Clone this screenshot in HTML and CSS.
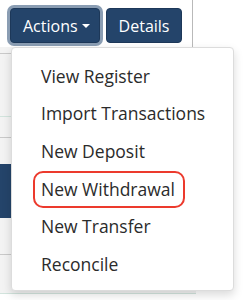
FILE: index.html
```html
<!DOCTYPE html>
<html lang="en">
<head>
<meta charset="UTF-8">
<meta name="viewport" content="width=device-width, initial-scale=1.0">
<title>Account actions</title>
<link rel="stylesheet" href="styles.css">
</head>
<body>
<div class="page">
    <div class="toolbar">
        <div class="btn-group">
            <a href="#" class="btn btn-focus">Actions <span class="caret"></span></a>
            <a href="#" class="btn">Details</a>
        </div>
        <div class="side-cell"></div>
    </div>
    <div class="rows">
        <div class="row row-a"></div>
        <div class="row row-b"></div>
        <div class="row row-c"></div>
        <div class="row row-d"></div>
        <div class="row row-e"></div>
        <div class="row row-f"></div>
        <div class="row row-g"></div>
    </div>

    <!-- dropdown menu open under Actions -->
    <ul class="dropdown-menu">
        <li><a href="#">View Register</a></li>
        <li><a href="#">Import Transactions</a></li>
        <li><a href="#">New Deposit</a></li>
        <li><a href="#" class="marked">New Withdrawal</a></li>
        <li><a href="#">New Transfer</a></li>
        <li><a href="#">Reconcile</a></li>
    </ul>
</div>
</body>
</html>
```

FILE: styles.css
```css
body {
    margin: 0;
    padding: 0;
    background-color: #fff;
    font-family: "Open Sans", "Liberation Sans", Arial, sans-serif;
}
.page {
    position: relative;
    width: 245px;
    height: 300px;
    overflow: hidden;
}
.toolbar {
    display: flex;
    height: 47px;
}
.btn-group {
    display: flex;
    gap: 6px;
    padding: 8px 0 0 10px;
}
.btn {
    display: inline-flex;
    align-items: center;
    height: 35px;
    box-sizing: border-box;
    padding: 0 12px;
    background-color: #24446a;
    border: 1px solid #1d3859;
    border-radius: 4px;
    color: #fff;
    font-size: 16px;
    text-decoration: none;
}
.btn-focus {
    padding-right: 9px;
    box-shadow: 0 0 0 3px #8a9db3;
}
.caret {
    display: inline-block;
    width: 0;
    height: 0;
    margin-left: 4px;
    border-top: 4px solid #fff;
    border-left: 4px solid transparent;
    border-right: 4px solid transparent;
}
.side-cell {
    margin-left: auto;
    width: 52px;
    border-left: 1px solid #b9b9b9;
}
.rows {
    width: 196px;
    background-color: #f3f3f3;
}
.row {
    box-sizing: border-box;
}
.row-a { height: 7px; border-bottom: 1px solid #c9c9c9; }
.row-b { height: 63px; border-bottom: 1px solid #d2e4dd; }
.row-c { height: 21px; border-bottom: 1px solid #c9c9c9; }
.row-d { height: 26px; }
.row-e { height: 54px; background-color: #24446a; }
.row-f { height: 37px; border-bottom: 1px solid #c9c9c9; }
.row-g { height: 39px; border-bottom: 1px solid #d2e4dd; }

/* dropdown */
.dropdown-menu {
    position: absolute;
    top: 47px;
    left: 11px;
    width: 223px;
    height: 244px;
    box-sizing: border-box;
    margin: 0;
    padding: 9.5px 0 0 0;
    list-style: none;
    background: #fff;
    border: 1px solid #dcdcdc;
    border-radius: 4px;
    box-shadow: 0 4px 10px rgba(0,0,0,0.15);
}
.dropdown-menu li {
    display: flex;
}
.dropdown-menu a {
    display: block;
    height: 37.7px;
    box-sizing: border-box;
    margin-left: 21px;
    padding: 0 8px 0 6px;
    border: 2px solid transparent;
    border-radius: 10px;
    color: #2b2b2b;
    font-size: 17.5px;
    line-height: 33.7px;
    text-decoration: none;
}
.dropdown-menu a.marked {
    border-color: #ec3a2d;
}
```
